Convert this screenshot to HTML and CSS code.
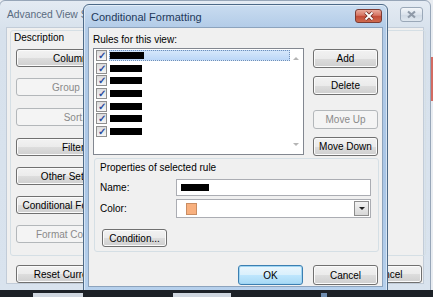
FILE: index.html
```html
<!DOCTYPE html>
<html lang="en">
<head>
  <meta charset="UTF-8" />
  <title>Conditional Formatting</title>
  <link rel="stylesheet" href="styles.css">
</head>
<body>
  <div class="desktop">
    <div class="edge-red"></div>

    <!-- window behind: Advanced View Settings -->
    <div class="window back">
      <div class="titlebar">
        <span class="title">Advanced View Settings</span>
        <span class="close-btn grey">
          <svg width="11" height="9" viewBox="0 0 11 9"><path d="M2 1.5 L9 7.5 M9 1.5 L2 7.5" stroke="#8f9aa8" stroke-width="2.2"/></svg>
        </span>
      </div>
      <div class="client">
        <div class="groupbox desc">
          <div class="group-label">Description</div>
          <div class="back-buttons">
            <button class="btn wide">Columns...</button>
            <button class="btn wide disabled">Group By...</button>
            <button class="btn wide disabled">Sort...</button>
            <button class="btn wide">Filter...</button>
            <button class="btn wide">Other Settings...</button>
            <button class="btn wide">Conditional Formatting...</button>
            <button class="btn wide disabled">Format Columns...</button>
          </div>
        </div>
        <div class="back-footer">
          <button class="btn wide">Reset Current View</button>
          <button class="btn back-cancel">Cancel</button>
        </div>
      </div>
    </div>

    <!-- active dialog -->
    <div class="window front">
      <div class="titlebar">
        <span class="title">Conditional Formatting</span>
        <span class="close-btn red">
          <svg width="12" height="10" viewBox="0 0 12 10"><path d="M2.5 1.5 L9.5 8.5 M9.5 1.5 L2.5 8.5" stroke="#6b2a24" stroke-width="3.4"/><path d="M2.5 1.5 L9.5 8.5 M9.5 1.5 L2.5 8.5" stroke="#fff" stroke-width="1.8"/></svg>
        </span>
      </div>
      <div class="client">
        <div class="rules-label">Rules for this view:</div>
        <div class="rules-row">
          <div class="listbox">
            <div class="rows">
              <div class="rule selected"><span class="check">&#10003;</span><span class="redact" style="width:34px"></span></div>
              <div class="rule"><span class="check">&#10003;</span><span class="redact" style="width:32px"></span></div>
              <div class="rule"><span class="check">&#10003;</span><span class="redact" style="width:32px"></span></div>
              <div class="rule"><span class="check">&#10003;</span><span class="redact" style="width:32px"></span></div>
              <div class="rule"><span class="check">&#10003;</span><span class="redact" style="width:32px"></span></div>
              <div class="rule"><span class="check">&#10003;</span><span class="redact" style="width:32px"></span></div>
              <div class="rule"><span class="check">&#10003;</span><span class="redact" style="width:32px"></span></div>
            </div>
            <div class="scrollbar">
              <span class="arrow up"></span>
              <span class="arrow down"></span>
            </div>
          </div>
          <div class="side-buttons">
            <button class="btn">Add</button>
            <button class="btn">Delete</button>
            <button class="btn disabled gap">Move Up</button>
            <button class="btn">Move Down</button>
          </div>
        </div>

        <div class="groupbox props">
          <div class="group-label">Properties of selected rule</div>
          <div class="field name-row">
            <label>Name:</label>
            <div class="textbox"><span class="redact" style="width:28px"></span></div>
          </div>
          <div class="field color-row">
            <label>Color:</label>
            <div class="combo">
              <span class="swatch"></span>
              <span class="drop"><span class="arrow down dark"></span></span>
            </div>
          </div>
          <button class="btn cond">Condition...</button>
        </div>

        <div class="footer">
          <button class="btn default">OK</button>
          <button class="btn">Cancel</button>
        </div>
      </div>
    </div>

    <div class="taskbar">
      <span class="tb-item" style="width:50px"></span>
      <span class="tb-item" style="width:58px"></span>
      <span class="tb-dot"></span>
    </div>
  </div>
</body>
</html>
```

FILE: styles.css
```css
body {
  margin: 0;
  font-family: "Liberation Sans", Arial, sans-serif;
  font-size: 10px;
  color: #000;
}
.desktop {
  width: 433px;
  height: 297px;
  position: relative;
  overflow: hidden;
  background: #e9edf2;
}
.edge-red {
  position: absolute;
  left: 430px;
  top: 57px;
  width: 3px;
  height: 44px;
  background: #d36b62;
}

/* windows */
.window {
  position: absolute;
  box-sizing: border-box;
  border-radius: 6px 6px 0 0;
  display: flex;
  flex-direction: column;
}
.window .titlebar {
  height: 22px;
  display: flex;
  align-items: center;
  justify-content: space-between;
  position: relative;
}
.window .title {
  font-size: 11px;
  white-space: nowrap;
}
.window .client {
  background: #f0f0f0;
  box-sizing: border-box;
  position: relative;
}

.back {
  left: -1px;
  top: 0;
  width: 432px;
  height: 291px;
  border: 1px solid #97a6b8;
  background: linear-gradient(#e4ebf3, #d7e1ec 30px, #d9e3ee);
  padding: 0 6px 6px 6px;
}
.back .titlebar {
  height: 26px;
  padding-left: 1px;
}
.back .title {
  color: #596b80;
  font-size: 10.3px;
}
.back .client {
  flex: 1;
  padding: 2px 0 0 3px;
  border: 1px solid #c2ccd8;
}
.close-btn {
  display: flex;
  align-items: center;
  justify-content: center;
  box-sizing: border-box;
  border-radius: 3px;
}
.close-btn.grey {
  width: 23px;
  height: 15px;
  margin-right: 1px;
  border: 1px solid #9aa8b8;
  background: linear-gradient(#f3f6f9, #dbe3ec 50%, #cfd9e4 51%, #dfe7ef);
}
.close-btn.red {
  width: 27px;
  height: 14px;
  border: 1px solid #7b3b33;
  background: linear-gradient(#e9a99b, #d67563 45%, #c24a37 50%, #cf6a4e);
}

.groupbox {
  border: 1px solid #d5dfe5;
  border-radius: 3px;
  box-sizing: border-box;
}
.group-label {
  height: 12px;
  line-height: 12px;
}
.desc {
  width: 416px;
  height: 226px;
  padding: 1px 0 0 3px;
}
.back-buttons {
  display: flex;
  flex-direction: column;
  gap: 11px;
  padding: 5px 0 0 2px;
}
.back-buttons .btn:nth-child(3),
.back-buttons .btn:nth-child(4) {
  margin-top: 1px;
}
.back-footer {
  display: flex;
  justify-content: space-between;
  padding: 9px 1px 0 6px;
}
.btn.wide {
  width: 122px;
  height: 18px;
}
.btn.back-cancel {
  width: 70px;
  height: 18px;
}

.front {
  left: 83px;
  top: 4px;
  width: 305px;
  height: 288px;
  border: 1px solid #4d6a88;
  background: linear-gradient(#c9dcf0, #b3cce8 22px, #aac6e6 60%, #b6d0ec);
  padding: 0 4px 4px 4px;
  box-shadow: 0 0 0 1px rgba(255,255,255,0.5) inset;
}
.front .titlebar {
  height: 22px;
  padding-left: 3px;
  align-items: flex-start;
}
.front .title {
  color: #1e395b;
  margin-top: 6px;
}
.front .close-btn.red {
  margin-top: 4px;
  margin-right: 1px;
}
.front .client {
  height: 260px;
  padding: 6px 0 0 4px;
  border: 1px solid #8ca3bd;
}

/* buttons */
.btn {
  display: flex;
  align-items: center;
  justify-content: center;
  box-sizing: border-box;
  padding: 0;
  border: 1px solid #707070;
  border-radius: 3px;
  background: linear-gradient(#f2f2f2 0%, #ebebeb 50%, #dddddd 51%, #cfcfcf 100%);
  box-shadow: inset 0 0 0 1px #fbfbfb;
  font-family: "Liberation Sans", Arial, sans-serif;
  font-size: 10px;
  color: #000;
  white-space: nowrap;
}
.btn.disabled {
  border-color: #b3b7ba;
  background: #f4f4f4;
  box-shadow: none;
  color: #8a8a8a;
}
.btn.default {
  border-color: #3c7fb1;
  background: linear-gradient(#eaf6fd 0%, #d9f0fc 50%, #bee6fd 51%, #a7d9f5 100%);
  box-shadow: inset 0 0 0 1px #9fd5f3;
}

/* rules list */
.rules-label {
  height: 14px;
  line-height: 11px;
}
.rules-row {
  display: flex;
  gap: 9px;
}
.listbox {
  width: 211px;
  height: 107px;
  box-sizing: border-box;
  border: 1px solid #828790;
  background: #fff;
  display: flex;
}
.rows {
  flex: 1;
  padding: 0 0 0 2px;
}
.rule {
  height: 12.7px;
  display: flex;
  align-items: center;
  gap: 2px;
  position: relative;
}
.check {
  width: 11px;
  height: 11px;
  box-sizing: border-box;
  border: 1px solid #8f8f8f;
  background: linear-gradient(#dcdcdc, #f6f6f6);
  color: #2f4d9e;
  font-size: 10px;
  line-height: 9px;
  text-align: center;
  font-weight: bold;
}
.redact {
  display: inline-block;
  height: 7px;
  background: #000;
}
.rule.selected::before {
  content: "";
  position: absolute;
  left: 13px;
  top: 1px;
  width: 181px;
  height: 11px;
  background: linear-gradient(#d5e7fb, #bcd7f7);
  border: 1px dotted #6f8fb8;
  box-sizing: border-box;
}
.rule .redact {
  position: relative;
  margin-left: 1px;
}
.scrollbar {
  width: 15px;
  display: flex;
  flex-direction: column;
  justify-content: space-between;
  align-items: center;
  padding: 8px 0 8px;
}
.arrow {
  width: 0;
  height: 0;
  border-left: 3px solid transparent;
  border-right: 3px solid transparent;
}
.arrow.up {
  border-bottom: 3px solid #b5b5b5;
}
.arrow.down {
  border-top: 3px solid #b5b5b5;
}
.arrow.down.dark {
  border-top-color: #202020;
}
.side-buttons {
  width: 65px;
  display: flex;
  flex-direction: column;
  gap: 8px;
  padding-top: 1px;
}
.side-buttons .btn {
  height: 19px;
}
.side-buttons .gap {
  margin-top: 7px;
}

/* properties */
.props {
  width: 285px;
  height: 94px;
  margin: 2px 0 0 1px;
  padding: 3px 0 0 5px;
}
.field {
  display: flex;
  align-items: center;
}
.field label {
  width: 76px;
}
.name-row {
  margin-top: 5px;
  height: 17px;
}
.color-row {
  margin-top: 3px;
  height: 19px;
}
.textbox {
  width: 195px;
  height: 17px;
  box-sizing: border-box;
  border: 1px solid #abadb3;
  background: #fff;
  display: flex;
  align-items: center;
  padding-left: 4px;
}
.combo {
  width: 195px;
  height: 19px;
  box-sizing: border-box;
  border: 1px solid #abadb3;
  background: #fff;
  display: flex;
  align-items: center;
  justify-content: space-between;
  padding: 0 1px 0 9px;
}
.swatch {
  width: 11px;
  height: 12px;
  background: #f8b07e;
  border: 1px solid #c98d63;
  box-sizing: border-box;
}
.drop {
  width: 15px;
  height: 15px;
  box-sizing: border-box;
  border: 1px solid #8d8d8d;
  background: linear-gradient(#f2f2f2, #d8d8d8);
  display: flex;
  align-items: center;
  justify-content: center;
}
.btn.cond {
  width: 65px;
  height: 18px;
  margin: 11px 0 0 2px;
}

.footer {
  display: flex;
  gap: 10px;
  padding-left: 145px;
  margin-top: 13px;
}
.footer .btn {
  width: 65px;
  height: 20px;
}

.taskbar {
  position: absolute;
  left: 0;
  top: 290px;
  width: 433px;
  height: 7px;
  background: #1d2127;
  display: flex;
  align-items: flex-end;
  gap: 90px;
  padding-left: 33px;
  box-sizing: border-box;
}
.tb-item {
  height: 4px;
  background: #cfd6df;
}
.tb-dot {
  width: 6px;
  height: 4px;
  background: #6f8db0;
}
```
